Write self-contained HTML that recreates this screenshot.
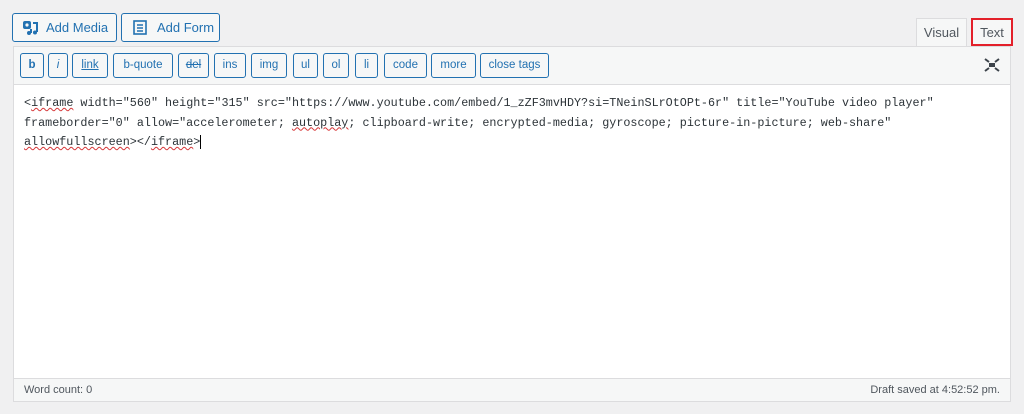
<!DOCTYPE html>
<html><head><style>
body{margin:0;width:1024px;height:414px;background:#f0f0f1;font-family:"Liberation Sans",sans-serif;position:relative;overflow:hidden}
.btn{position:absolute;border:1px solid #2271b1;border-radius:3px;background:#f6f7f7;color:#2271b1;font-size:13px;box-sizing:border-box;height:29px;top:13px;line-height:27px}
.wrap{position:absolute;left:13px;top:46px;width:998px;height:356px;border:1px solid #dcdcde;box-sizing:border-box;background:#fff}
.tb{position:absolute;left:0;top:0;right:0;height:37px;background:#f6f7f7;border-bottom:1px solid #dcdcde}
.q{position:absolute;top:6px;height:25px;border:1px solid #2271b1;border-radius:3px;box-sizing:border-box;background:#f6f7f7;color:#2271b1;font-size:11.5px;line-height:23px;text-align:center}
.ta{position:absolute;left:10px;top:47px;font-family:"Liberation Mono",monospace;font-size:11.75px;line-height:19.5px;color:#2c3338;white-space:pre}
.sp{text-decoration:underline wavy #d63638;text-decoration-thickness:1px}
.st{position:absolute;left:0;right:0;bottom:0;height:22px;background:#f6f7f7;border-top:1px solid #dcdcde;font-size:11px;color:#50575e;line-height:22px}
.tab{position:absolute;top:18px;height:28px;box-sizing:border-box;font-size:13px;line-height:27px;text-align:center;color:#50575e}
</style></head><body>
<div class="btn" style="left:12px;width:105px"><svg style="position:absolute;left:9px;top:6px" width="17" height="16" viewBox="0 0 17 16"><rect x="1" y="1" width="8" height="8" rx="2" fill="#2271b1"/><circle cx="5" cy="5" r="1.6" fill="#f6f7f7"/><path d="M11 3h4v9" stroke="#2271b1" stroke-width="2" fill="none"/><circle cx="13" cy="12.5" r="2" fill="#2271b1"/><circle cx="7" cy="13" r="2" fill="#2271b1"/><path d="M9 13V9" stroke="#2271b1" stroke-width="2"/></svg><span style="position:absolute;left:33px">Add Media</span></div>
<div class="btn" style="left:121px;width:99px"><svg style="position:absolute;left:11px;top:6px" width="14" height="15" viewBox="0 0 14 15"><rect x="1" y="1" width="12" height="13" fill="none" stroke="#2271b1" stroke-width="1.6"/><path d="M4 5h6M4 8h6M4 11h6" stroke="#2271b1" stroke-width="1.4"/></svg><span style="position:absolute;left:35px">Add Form</span></div>
<div class="tab" style="left:916px;width:51px;background:#f6f7f7;border:1px solid #dcdcde;border-bottom:none">Visual</div>
<div class="tab" style="left:971px;width:42px;background:#f6f7f7;border:2px solid #e3202a;line-height:25px">Text</div>
<div class="wrap">
<div class="tb">
<div class="q" style="left:6px;width:24px;font-weight:bold">b</div>
<div class="q" style="left:34px;width:20px;font-style:italic">i</div>
<div class="q" style="left:58px;width:36px;text-decoration:underline">link</div>
<div class="q" style="left:99px;width:60px">b-quote</div>
<div class="q" style="left:164px;width:31px;text-decoration:line-through">del</div>
<div class="q" style="left:200px;width:32px">ins</div>
<div class="q" style="left:237px;width:36px">img</div>
<div class="q" style="left:279px;width:25px">ul</div>
<div class="q" style="left:309px;width:26px">ol</div>
<div class="q" style="left:341px;width:23px">li</div>
<div class="q" style="left:370px;width:43px">code</div>
<div class="q" style="left:417px;width:45px">more</div>
<div class="q" style="left:466px;width:69px">close tags</div>
<svg style="position:absolute;left:970px;top:11px" width="16" height="14" viewBox="0 0 16 14"><path d="M1 1l4 3M15 1l-4 3M1 13l4-3M15 13l-4-3" stroke="#3c434a" stroke-width="2"/><rect x="5" y="5" width="6" height="4" fill="#3c434a"/></svg>
</div>
<div class="ta">&lt;<span class="sp">iframe</span> width="560" height="315" src="https://www.youtube.com/embed/1_zZF3mvHDY?si=TNeinSLrOtOPt-6r" title="YouTube video player"
frameborder="0" allow="accelerometer; <span class="sp">autoplay</span>; clipboard-write; encrypted-media; gyroscope; picture-in-picture; web-share"
<span class="sp">allowfullscreen</span>&gt;&lt;/<span class="sp">iframe</span>&gt;<span style="border-left:1px solid #000"></span></div>
<div class="st"><span style="position:absolute;left:10px">Word count: 0</span><span style="position:absolute;right:10px">Draft saved at 4:52:52 pm.</span></div>
</div>
</body></html>
